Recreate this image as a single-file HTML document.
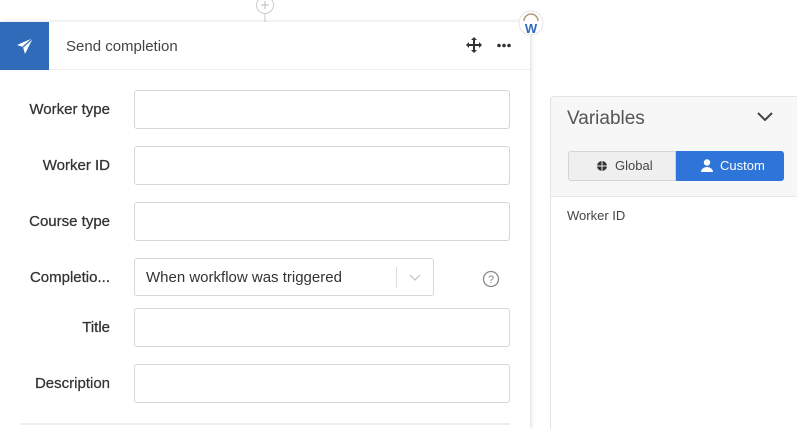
<!DOCTYPE html>
<html><head><style>
*{box-sizing:border-box;margin:0;padding:0}
html,body{width:797px;height:429px;overflow:hidden}
body{background:#fff;font-family:"Liberation Sans",sans-serif;position:relative;color:#333}
.card{position:absolute;left:0;top:22px;width:530px;height:407px;background:#fff;box-shadow:1px 0 4px rgba(0,0,0,.15)}
.hdr{height:48px;border-bottom:1px solid #eee;position:relative}
.blue{position:absolute;left:0;top:0;width:49px;height:48px;background:#2f6bb8}
.title{position:absolute;left:66px;top:16px;font-size:15px;color:#444}
.lbl{position:absolute;right:420px;font-size:15px;color:#333;text-align:right;-webkit-text-stroke:0.25px #333}
.in{position:absolute;left:134px;width:376px;height:39px;border:1px solid #d6d6d6;border-radius:3px;background:#fff}
.panel{position:absolute;left:550px;top:96px;width:247px;height:333px;background:#f7f7f7;border:1px solid #e3e3e3;border-right:none;border-bottom:none;border-radius:4px 0 0 0;overflow:hidden}
</style></head><body>
<svg style="position:absolute;left:256px;top:-4px" width="20" height="27"><circle cx="9" cy="9" r="8.5" fill="#fff" stroke="#ccc"/><path d="M9 5v8M5 9h8" stroke="#bbb"/><path d="M9 18v9" stroke="#ccc"/></svg>
<div class="card">
 <div class="hdr">
  <div class="blue"><svg style="position:absolute;left:16px;top:15px" width="18" height="18" viewBox="0 0 18 18"><path d="M17 1L1 8l6 2 2 7z" fill="#fff"/><path d="M17 1L7 10" stroke="#2f6bb8" stroke-width="1.2"/></svg></div>
  <div class="title">Send completion</div>
  <svg style="position:absolute;left:466px;top:15px" width="16" height="16" viewBox="0 0 16 16"><path d="M8 1v14M1 8h14" stroke="#333" stroke-width="2"/><path d="M8 0l3 3H5zM8 16l3-3H5zM0 8l3 3V5zM16 8l-3 3V5z" fill="#333"/></svg>
  <svg style="position:absolute;left:497px;top:21px" width="14" height="5"><circle cx="2" cy="2.5" r="1.8" fill="#333"/><circle cx="7" cy="2.5" r="1.8" fill="#333"/><circle cx="12" cy="2.5" r="1.8" fill="#333"/></svg>
 </div>
 <div class="lbl" style="top:79px">Worker type</div>
 <div class="lbl" style="top:135px">Worker ID</div>
 <div class="lbl" style="top:191px">Course type</div>
 <div class="lbl" style="top:247px">Completio...</div>
 <div class="lbl" style="top:297px">Title</div>
 <div class="lbl" style="top:353px">Description</div>
 <div class="in" style="top:68px"></div>
 <div class="in" style="top:124px"></div>
 <div class="in" style="top:180px"></div>
 <div class="in" style="top:236px;width:300px;height:38px"><span style="position:absolute;left:11px;top:10px;font-size:15px;color:#333">When workflow was triggered</span><div style="position:absolute;left:261px;top:8px;width:1px;height:21px;background:#ddd"></div><svg style="position:absolute;left:274px;top:15px" width="12" height="8"><path d="M1 1l5 5 5-5" stroke="#bbb" fill="none"/></svg></div>
 <svg style="position:absolute;left:482px;top:248px" width="18" height="18"><circle cx="9" cy="9" r="7.5" fill="none" stroke="#888" stroke-width="1.3"/><text x="9" y="13" font-size="11" text-anchor="middle" fill="#888" font-family="Liberation Sans">?</text></svg>
 <div class="in" style="top:286px"></div>
 <div class="in" style="top:342px"></div>
 <div style="position:absolute;left:20px;top:401px;width:490px;height:2px;background:#eee"></div>
</div>
<svg style="position:absolute;left:518px;top:10px" width="26" height="26"><circle cx="13" cy="13" r="12" fill="#fff" stroke="#e5e5e5"/><path d="M6 11a7 7 0 0 1 14 0" fill="none" stroke="#b29b7a" stroke-width="1.5"/><text x="13" y="23" font-size="13" font-weight="bold" text-anchor="middle" fill="#2f6bb8" font-family="Liberation Sans">W</text></svg>
<div class="panel">
 <div style="position:absolute;left:16px;top:11px;font-size:19px;color:#555">Variables</div>
 <svg style="position:absolute;left:206px;top:15px" width="16" height="10"><path d="M1 1l7 7 7-7" stroke="#444" stroke-width="2" fill="none"/></svg>
 <div style="position:absolute;left:17px;top:54px;width:108px;height:30px;background:#efefef;border:1px solid #d5d5d5;border-radius:3px 0 0 3px;font-size:13px;color:#444;line-height:28px">
  <svg style="position:absolute;left:27px;top:8px" width="12" height="12"><circle cx="6" cy="6" r="5" fill="#333"/><path d="M1 6h10M6 1v10" stroke="#efefef"/></svg><span style="position:absolute;left:46px">Global</span></div>
 <div style="position:absolute;left:125px;top:54px;width:108px;height:30px;background:#2f74d9;border-radius:0 3px 3px 0;color:#fff;font-size:13px;line-height:30px;padding-left:44px">
  <svg style="position:absolute;left:25px;top:8px" width="12" height="13"><circle cx="6" cy="3.5" r="3.2" fill="#fff"/><path d="M0 13a6 5 0 0 1 12 0z" fill="#fff"/></svg>Custom</div>
 <div style="position:absolute;left:0;top:99px;width:260px;height:240px;background:#fff;border-top:1px solid #e8e8e8"></div>
 <div style="position:absolute;left:16px;top:111px;font-size:13px;color:#444">Worker ID</div>
</div>
</body></html>
